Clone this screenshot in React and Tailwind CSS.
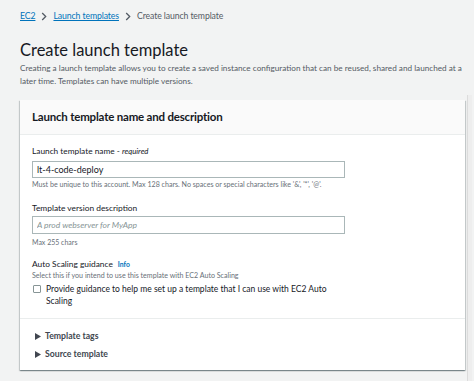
import { useState } from "react";

const Caret = () => (
  <svg width="6" height="7" viewBox="0 0 6 7" className="shrink-0">
    <path d="M0 0 L6 3.5 L0 7 Z" fill="#414750" />
  </svg>
);

const Chevron = () => (
  <svg width="6" height="9" viewBox="0 0 6 9" className="shrink-0 mx-[6px]">
    <path d="M1.2 1 L4.7 4.5 L1.2 8" fill="none" stroke="#545b64" strokeWidth="1.3" />
  </svg>
);

export default function App() {
  const [name, setName] = useState("lt-4-code-deploy");
  const [desc, setDesc] = useState("");
  const [guide, setGuide] = useState(false);

  return (
    <div
      className="w-[474px] h-[381px] overflow-hidden bg-[#f2f3f3] text-[#16191f] flex"
      style={{ fontFamily: 'Lato, "Noto Sans", Arial, sans-serif' }}
    >
      <div className="flex-1 pl-[20px] pr-[2px] pt-[8px]">
        {/* breadcrumbs */}
        <div className="flex items-center text-[8.7px] tracking-[-0.1px] h-[16px]">
          <a className="text-[#0073bb] underline">EC2</a>
          <Chevron />
          <a className="text-[#0073bb] underline">Launch templates</a>
          <Chevron />
          <span className="text-[#545b64]">Create launch template</span>
        </div>

        <h1 className="text-[16.5px] leading-[24px] mt-[14px] font-normal">Create launch template</h1>
        <p className="text-[8.2px] leading-[13px] text-[#545b64]">
          Creating a launch template allows you to create a saved instance configuration that can be reused, shared and launched at a later time. Templates can have multiple versions.
        </p>

        {/* card */}
        <div className="mt-[12px] bg-white shadow-[0_1px_1px_0_rgba(0,28,36,0.3),1px_1px_1px_0_rgba(0,28,36,0.15),-1px_1px_1px_0_rgba(0,28,36,0.15)]">
          <div className="bg-[#fafafa] border-b border-[#eaeded] h-[35px] px-[12px] flex items-center">
            <h2 className="text-[11.5px] font-bold tracking-[-0.2px]">Launch template name and description</h2>
          </div>

          <div className="px-[12px] pt-[10px]">
            <label className="block text-[8.3px] leading-[12px]">
              Launch template name - <i className="text-[7.8px]">required</i>
            </label>
            <input
              value={name}
              onChange={(e) => setName(e.target.value)}
              className="mt-[4px] block w-[313px] h-[17px] border border-[#aab7b8] px-[4px] text-[9px] text-[#16191f] outline-none"
            />
            <p className="text-[7.1px] leading-[10px] text-[#687078] mt-[2px]">
              Must be unique to this account. Max 128 chars. No spaces or special characters like '&amp;', '*', '@'.
            </p>

            <label className="block text-[8.4px] leading-[12px] mt-[12px]">Template version description</label>
            <input
              value={desc}
              onChange={(e) => setDesc(e.target.value)}
              placeholder="A prod webserver for MyApp"
              className="mt-[2px] block w-[313px] h-[18px] border border-[#aab7b8] px-[4px] text-[8.5px] italic placeholder:text-[#879596] outline-none"
            />
            <p className="text-[7px] leading-[10px] text-[#687078] mt-[3px]">Max 255 chars</p>

            <div className="flex items-baseline gap-[5px] mt-[11px] h-[12px]">
              <span className="text-[8.4px] leading-[12px]">Auto Scaling guidance</span>
              <span className="text-[6.8px] font-bold text-[#0073bb]">Info</span>
            </div>
            <p className="text-[7.1px] leading-[10px] text-[#687078] mt-[1px]">
              Select this if you intend to use this template with EC2 Auto Scaling
            </p>
            <label className="flex items-start gap-[5px] mt-[2px] cursor-pointer">
              <input
                type="checkbox"
                checked={guide}
                onChange={(e) => setGuide(e.target.checked)}
                className="appearance-none w-[8px] h-[8px] border border-[#879596] rounded-[1px] mt-[2px] ml-[1px] shrink-0 checked:bg-[#0073bb]"
              />
              <span className="text-[8.5px] leading-[12px] w-[301px]">
                Provide guidance to help me set up a template that I can use with EC2 Auto Scaling
              </span>
            </label>
          </div>

          <div className="border-t border-[#eaeded] mt-[11px] px-[12px] pt-[11px] pb-[10px] flex flex-col gap-[6px]">
            <div className="flex items-center gap-[4px] h-[12px] pl-[3px]">
              <Caret />
              <span className="text-[8.7px] font-bold text-[#414750] leading-[12px]">Template tags</span>
            </div>
            <div className="flex items-center gap-[4px] h-[12px] pl-[3px]">
              <Caret />
              <span className="text-[8.7px] font-bold text-[#414750] leading-[12px]">Source template</span>
            </div>
          </div>
        </div>
      </div>
      <div className="w-[5px] bg-[#eeeeee] border-l border-[#dcdcdc] mr-[2px] mt-[95px]" />
    </div>
  );
}
